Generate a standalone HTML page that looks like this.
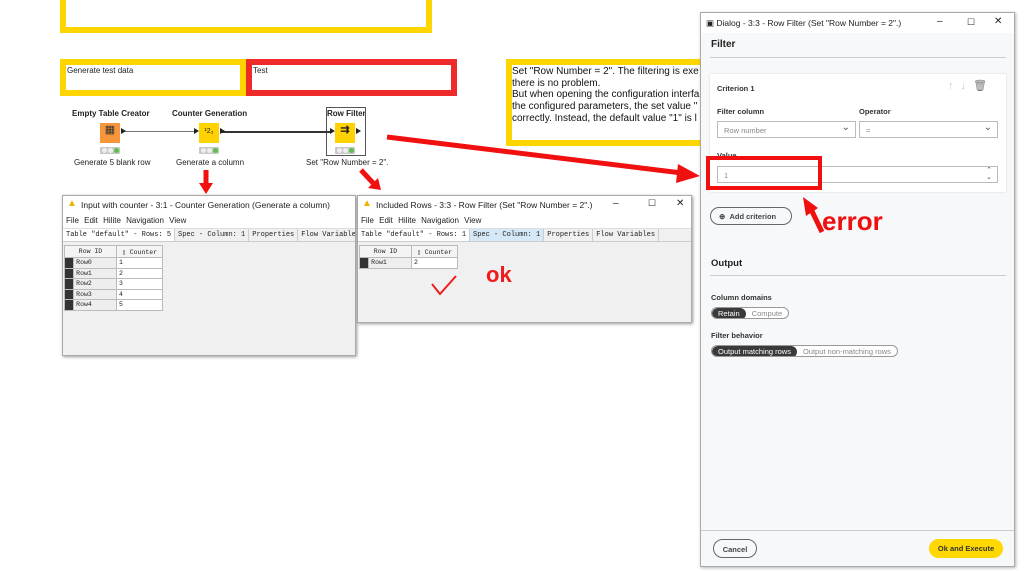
<!DOCTYPE html>
<html><head><meta charset="utf-8"><style>
*{box-sizing:border-box;margin:0;padding:0}
body{width:1024px;height:571px;background:#fff;position:relative;overflow:hidden;font-family:"Liberation Sans",sans-serif;color:#222}
.a{position:absolute}
.yb{position:absolute;border:6px solid #ffd500}
.t{font-size:8px;color:#222}
.node{position:absolute;width:20px;height:20px}
.lt{position:absolute;width:20px;height:7px;background:#c8c8c8;border-radius:1px}
.lt i{position:absolute;top:1px;width:5px;height:5px;border-radius:50%;background:#eee}
.win{position:absolute;background:#f0f0f0;border:1px solid #aaa;box-shadow:1px 1px 3px rgba(0,0,0,.4)}
.win .tb{background:#fff;height:18px;font-size:8.5px;padding:4px 0 0 18px;position:relative}
.win .mb{background:#fff;height:14px;font-size:8px;padding:2px 3px;word-spacing:3px}
.tabs{height:14px;background:#f0f0f0;border-top:1px solid #ddd;border-bottom:1px solid #ccc;font-family:"Liberation Mono",monospace;font-size:7px;white-space:nowrap;overflow:hidden}
.tabs span{display:inline-block;padding:2px 3px;border-right:1px solid #ccc;height:13px}
table{border-collapse:collapse;font-family:"Liberation Mono",monospace;font-size:6.5px;margin:3px 0 0 1px}
td{border:1px solid #bbb;height:10.5px;padding:0 2px;background:#fff;white-space:nowrap}
td.h{background:#f4f4f4;text-align:center;height:12px}
td.k{background:#333;width:9px;padding:0}
td.r{background:#eee;width:42px}
.dl{font-size:8px;color:#333}
.sel{position:absolute;height:17px;border:1px solid #bbb;background:#fff;font-size:7.5px;color:#888;padding:4px 6px}
.pill{position:absolute;height:12px;border:1px solid #999;border-radius:7px;font-size:7.5px;color:#888;background:#fff;overflow:hidden;white-space:nowrap}
.pill span{display:inline-block;height:12px;padding:1px 6px}
.pill .on{background:#3a3a3a;color:#fff;border-radius:7px}
</style></head><body>

<div class="yb" style="left:60px;top:-6px;width:372px;height:39px"></div>
<div class="yb" style="left:60px;top:59px;width:186px;height:37px"></div>
<div class="a t" style="left:67px;top:66px">Generate test data</div>
<div class="a" style="left:246px;top:59px;width:211px;height:37px;border:6px solid #ee2a2a"></div>
<div class="a t" style="left:253px;top:66px">Test</div>
<div class="yb" style="left:506px;top:59px;width:200px;height:87px"></div>
<div class="a" style="left:512px;top:66px;font-size:10px;line-height:11.7px;width:188px;white-space:nowrap;overflow:hidden;color:#111">Set "Row Number = 2". The filtering is exe<br>there is no problem.<br>But when opening the configuration interfa<br>the configured parameters, the set value "<br>correctly. Instead, the default value "1" is l</div>

<div class="a t" style="left:72px;top:109px;font-weight:bold;font-size:8px">Empty Table Creator</div>
<div class="a t" style="left:172px;top:109px;font-weight:bold;font-size:8px">Counter Generation</div>
<div class="a t" style="left:327px;top:109px;font-weight:bold;font-size:8px">Row Filter</div>
<div class="a" style="left:326px;top:107px;width:40px;height:49px;border:1px solid #555"></div>
<div class="node" style="left:100px;top:123px;background:#f7953a;font-size:11px;color:#333;text-align:center">▦</div>
<div class="node" style="left:199px;top:123px;background:#ffd200;font-size:7px;text-align:center;padding-top:5px">¹2₃</div>
<div class="node" style="left:335px;top:123px;background:#ffd200;font-size:11px;text-align:center;font-weight:bold">⇉</div>
<div class="a" style="left:122px;top:131px;width:73px;height:1px;background:#777"></div>
<div class="a" style="left:221px;top:131px;width:109px;height:1.5px;background:#333"></div>
<div class="a" style="left:121px;top:128px;border-left:5px solid #222;border-top:3.5px solid transparent;border-bottom:3.5px solid transparent"></div>
<div class="a" style="left:194px;top:128px;border-left:5px solid #222;border-top:3.5px solid transparent;border-bottom:3.5px solid transparent"></div>
<div class="a" style="left:220px;top:128px;border-left:5px solid #222;border-top:3.5px solid transparent;border-bottom:3.5px solid transparent"></div>
<div class="a" style="left:330px;top:128px;border-left:5px solid #222;border-top:3.5px solid transparent;border-bottom:3.5px solid transparent"></div>
<div class="a" style="left:356px;top:128px;border-left:5px solid #222;border-top:3.5px solid transparent;border-bottom:3.5px solid transparent"></div>
<div class="lt" style="left:100px;top:147px"><i style="left:2px"></i><i style="left:8px"></i><i style="left:14px;background:#5cbf4a"></i></div>
<div class="lt" style="left:199px;top:147px"><i style="left:2px"></i><i style="left:8px"></i><i style="left:14px;background:#5cbf4a"></i></div>
<div class="lt" style="left:335px;top:147px"><i style="left:2px"></i><i style="left:8px"></i><i style="left:14px;background:#5cbf4a"></i></div>
<div class="a t" style="left:74px;top:158px">Generate 5 blank row</div>
<div class="a t" style="left:176px;top:158px">Generate a column</div>
<div class="a t" style="left:306px;top:158px">Set "Row Number = 2".</div>

<div class="win" style="left:62px;top:195px;width:294px;height:161px">
 <div class="tb"><span class="a" style="left:4px;top:2px;color:#f0b400;font-size:10px">▲</span>Input with counter - 3:1 - Counter Generation (Generate a column)</div>
 <div class="mb">File Edit Hilite Navigation View</div>
 <div class="tabs"><span style="background:#fff">Table "default" - Rows: 5</span><span>Spec - Column: 1</span><span>Properties</span><span>Flow Variables</span></div>
 <table><tr><td class="h" colspan="2" style="width:52px">Row ID</td><td class="h" style="width:46px">▯ Counter</td></tr>
 <tr><td class="k"></td><td class="r">Row0</td><td>1</td></tr>
 <tr><td class="k"></td><td class="r">Row1</td><td>2</td></tr>
 <tr><td class="k"></td><td class="r">Row2</td><td>3</td></tr>
 <tr><td class="k"></td><td class="r">Row3</td><td>4</td></tr>
 <tr><td class="k"></td><td class="r">Row4</td><td>5</td></tr></table>
</div>
<div class="win" style="left:357px;top:195px;width:335px;height:128px">
 <div class="tb"><span class="a" style="left:4px;top:2px;color:#f0b400;font-size:10px">▲</span>Included Rows - 3:3 - Row Filter (Set "Row Number = 2".)<span class="a" style="left:255px;top:2px;font-size:10px">–</span><span class="a" style="left:290px;top:2px;font-size:9px">☐</span><span class="a" style="left:318px;top:2px;font-size:10px">✕</span></div>
 <div class="mb">File Edit Hilite Navigation View</div>
 <div class="tabs"><span style="background:#fff">Table "default" - Rows: 1</span><span style="background:#d5e8f8">Spec - Column: 1</span><span>Properties</span><span>Flow Variables</span></div>
 <table><tr><td class="h" colspan="2" style="width:52px">Row ID</td><td class="h" style="width:46px">▯ Counter</td></tr>
 <tr><td class="k"></td><td class="r">Row1</td><td>2</td></tr></table>
</div>
<div class="a" style="left:486px;top:262px;font-size:22px;font-weight:bold;color:#ee1c1c">ok</div>
<svg class="a" style="left:0;top:0" width="1024" height="571">
 <path d="M432 284 L440 294 L456 276" stroke="#ee1c1c" stroke-width="2" fill="none"/>
 <path d="M206 170 L206 186" stroke="#f01010" stroke-width="5"/><path d="M199 183 L213 183 L206 194Z" fill="#f01010"/>
 <path d="M361 170 L374 184" stroke="#f01010" stroke-width="5"/><path d="M368 188 L381 190 L378 178Z" fill="#f01010"/>
 <path d="M387 137 L690 174" stroke="#f01010" stroke-width="5"/><path d="M678 164 L700 176 L676 183Z" fill="#f01010"/>
</svg>

<div class="a" style="left:700px;top:12px;width:315px;height:555px;background:#f7f8fa;border:1px solid #aaa;box-shadow:1px 1px 3px rgba(0,0,0,.3)">
 <div style="height:20px;background:#fff;font-size:8.5px;padding:5px 0 0 5px">▣ Dialog - 3:3 - Row Filter (Set "Row Number = 2".)<span class="a" style="left:236px;top:3px;font-size:10px">–</span><span class="a" style="left:266px;top:4px;font-size:9px">☐</span><span class="a" style="left:293px;top:3px;font-size:10px">✕</span></div>
 <div class="a" style="left:10px;top:26px;font-size:10px;font-weight:bold">Filter</div>
 <div class="a" style="left:9px;top:44px;width:296px;height:1px;background:#ccc"></div>
 <div class="a" style="left:9px;top:61px;width:296px;height:118px;background:#fff;box-shadow:0 0 2px rgba(0,0,0,.15)"></div>
 <div class="a dl" style="left:16px;top:71px;font-weight:bold;font-size:7.5px">Criterion 1</div>
 <div class="a" style="left:247px;top:66px;font-size:11px;color:#ccc;word-spacing:4px">↑ ↓ <span style="color:#777">🗑</span></div>
 <div class="a dl" style="left:16px;top:94px;font-weight:bold;font-size:7.5px">Filter column</div>
 <div class="a dl" style="left:158px;top:94px;font-weight:bold;font-size:7.5px">Operator</div>
 <div class="sel" style="left:16px;top:108px;width:139px">Row number<span class="a" style="right:5px;top:0;font-size:10px;color:#555">⌄</span></div>
 <div class="sel" style="left:158px;top:108px;width:139px">=<span class="a" style="right:5px;top:0;font-size:10px;color:#555">⌄</span></div>
 <div class="a dl" style="left:16px;top:138px;font-weight:bold;font-size:7.5px">Value</div>
 <div class="sel" style="left:16px;top:153px;width:281px">1<span class="a" style="right:5px;top:0;font-size:7px;color:#555;line-height:7px">⌃<br>⌄</span></div>
 <div class="a" style="left:9px;top:194px;width:82px;height:18px;border:1px solid #666;border-radius:9px;font-size:7.5px;padding:4px 0 0 8px;font-weight:bold;color:#444">⊕ &nbsp;Add criterion</div>
 <div class="a" style="left:10px;top:245px;font-size:9.5px;font-weight:bold">Output</div>
 <div class="a" style="left:9px;top:262px;width:296px;height:1px;background:#ccc"></div>
 <div class="a dl" style="left:10px;top:280px;font-weight:bold;font-size:7.5px">Column domains</div>
 <div class="pill" style="left:10px;top:294px"><span class="on">Retain</span><span>Compute</span></div>
 <div class="a dl" style="left:10px;top:318px;font-weight:bold;font-size:7.5px">Filter behavior</div>
 <div class="pill" style="left:10px;top:332px"><span class="on">Output matching rows</span><span>Output non-matching rows</span></div>
 <div class="a" style="left:0;top:517px;width:313px;height:1px;background:#ccc"></div>
 <div class="a" style="left:12px;top:526px;width:44px;height:19px;border:1px solid #666;border-radius:10px;font-size:7.5px;text-align:center;padding-top:5px;font-weight:bold;color:#444">Cancel</div>
 <div class="a" style="left:228px;top:526px;width:74px;height:19px;background:#ffd800;border-radius:10px;font-size:7.5px;text-align:center;padding-top:5px;font-weight:bold;color:#333">Ok and Execute</div>
</div>
<div class="a" style="left:706px;top:156px;width:116px;height:34px;border:4px solid #f01010"></div>
<svg class="a" style="left:0;top:0" width="1024" height="571">
 <path d="M822 232 L809 205" stroke="#f01010" stroke-width="5"/><path d="M803 197 L806 216 L818 208Z" fill="#f01010"/>
</svg>
<div class="a" style="left:822px;top:206px;font-size:26px;font-weight:bold;color:#ee1010">error</div>
</body></html>
